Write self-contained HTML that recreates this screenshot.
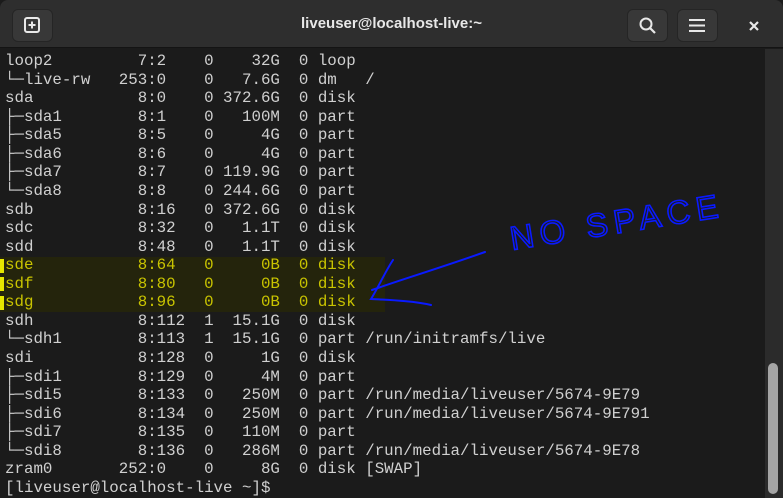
<!DOCTYPE html>
<html><head><meta charset="utf-8"><style>
*{margin:0;padding:0;box-sizing:border-box}
body{width:783px;height:498px;background:#1b1b1b;overflow:hidden;position:relative;font-family:"Liberation Sans",sans-serif}
#hdr{position:absolute;left:0;top:0;width:783px;height:48px;background:#2e2e2e;border-bottom:1px solid #141414;border-radius:8px 8px 0 0}
.btn{position:absolute;top:9px;height:33px;width:41px;background:#383838;border-radius:6px;border:1px solid #252525}
#title{position:absolute;left:0;width:783px;top:15px;text-align:center;color:#e8e8e8;font-weight:bold;font-size:15px}
#term{position:absolute;left:5px;top:52px;font-family:"Liberation Mono","DejaVu Sans Mono",monospace;font-size:15.8px;line-height:18.56px;color:#d0d0d0;white-space:pre}
.y{color:#c9c400}
#hl{position:absolute;left:0;top:257px;width:385px;height:55px;background:#24240c}
.mk{position:absolute;left:0;width:4px;height:14px;background:#e6e600}
#track{position:absolute;left:765px;top:49px;width:18px;height:449px;background:#2b2b2b}
#thumb{position:absolute;left:768px;top:363px;width:10px;height:131px;background:#a5a5a5;border-radius:5px}
</style></head><body>
<div id="hdr">
 <div class="btn" style="left:12px"><svg width="41" height="33" style="position:absolute;left:-1px;top:-1px"><rect x="13" y="9" width="14" height="14" rx="2" fill="none" stroke="#e8e8e8" stroke-width="2"/><path d="M20 12.5v7M16.5 16h7" stroke="#e8e8e8" stroke-width="2"/></svg></div>
 <div id="title">liveuser@localhost-live:~</div>
 <div class="btn" style="left:627px"><svg width="41" height="33" style="position:absolute;left:-1px;top:-1px"><circle cx="19" cy="15" r="5.5" fill="none" stroke="#e8e8e8" stroke-width="2"/><path d="M23 19l5 5" stroke="#e8e8e8" stroke-width="2.2"/></svg></div>
 <div class="btn" style="left:677px"><svg width="41" height="33" style="position:absolute;left:-1px;top:-1px"><path d="M12 11h16M12 16.5h16M12 22h16" stroke="#e8e8e8" stroke-width="2"/></svg></div>
 <svg width="12" height="12" style="position:absolute;left:748px;top:20px"><path d="M2 2l8 8M10 2l-8 8" stroke="#e8e8e8" stroke-width="2.2"/></svg>
</div>
<div id="hl"></div>
<div class="mk" style="top:259px"></div><div class="mk" style="top:277px"></div><div class="mk" style="top:296px"></div>
<div id="term">loop2         7:2    0    32G  0 loop
└─live-rw   253:0    0   7.6G  0 dm   /
sda           8:0    0 372.6G  0 disk
├─sda1        8:1    0   100M  0 part
├─sda5        8:5    0     4G  0 part
├─sda6        8:6    0     4G  0 part
├─sda7        8:7    0 119.9G  0 part
└─sda8        8:8    0 244.6G  0 part
sdb           8:16   0 372.6G  0 disk
sdc           8:32   0   1.1T  0 disk
sdd           8:48   0   1.1T  0 disk
<span class="y">sde           8:64   0     0B  0 disk</span>
<span class="y">sdf           8:80   0     0B  0 disk</span>
<span class="y">sdg           8:96   0     0B  0 disk</span>
sdh           8:112  1  15.1G  0 disk
└─sdh1        8:113  1  15.1G  0 part /run/initramfs/live
sdi           8:128  0     1G  0 disk
├─sdi1        8:129  0     4M  0 part
├─sdi5        8:133  0   250M  0 part /run/media/liveuser/5674-9E79
├─sdi6        8:134  0   250M  0 part /run/media/liveuser/5674-9E791
├─sdi7        8:135  0   110M  0 part
└─sdi8        8:136  0   286M  0 part /run/media/liveuser/5674-9E78
zram0       252:0    0     8G  0 disk [SWAP]
[liveuser@localhost-live ~]$</div>
<div id="track"></div><div id="thumb"></div>
<svg width="783" height="498" style="position:absolute;left:0;top:0">
 <path d="M485 252 C440 268 400 280 372 290" fill="none" stroke="#0a1aff" stroke-width="2" stroke-linecap="round"/>
 <path d="M393 260 C385 272 378 288 371 299 C390 300 415 301 431 305" fill="none" stroke="#0a1aff" stroke-width="2" stroke-linecap="round"/>
 <text x="512" y="250" transform="rotate(-9 512 250)" font-family="Liberation Sans,sans-serif" font-size="33" fill="none" stroke="#0a1aff" stroke-width="1.6" letter-spacing="6">NO SPACE</text>
</svg>
</body></html>
